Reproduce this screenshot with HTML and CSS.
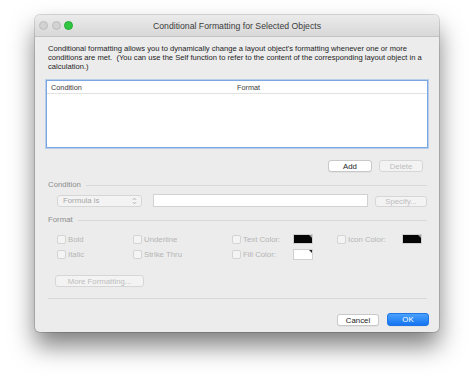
FILE: index.html
```html
<!DOCTYPE html>
<html lang="en">
<link rel="stylesheet" href="styles.css">
<head>
    <meta charset="UTF-8">
    <meta name="viewport" content="width=device-width, initial-scale=1.0">
    <title>Conditional Formatting</title>
</head>
<body>
    <div class="window">
        <div class="titlebar">
            <div class="lights">
                <span class="light"></span>
                <span class="light"></span>
                <span class="light green"></span>
            </div>
            <div class="title">Conditional Formatting for Selected Objects</div>
        </div>

        <div class="content">
            <p class="desc">Conditional formatting allows you to dynamically change a layout object's formatting whenever one or more conditions are met.&nbsp; (You can use the Self function to refer to the content of the corresponding layout object in a calculation.)</p>

            <div class="table">
                <div class="table-head">
                    <div class="col-cond">Condition</div>
                    <div class="col-format">Format</div>
                </div>
            </div>

            <div class="list-buttons">
                <button class="btn add">Add</button>
                <button class="btn delete" disabled>Delete</button>
            </div>

            <div class="section"><span>Condition</span><div class="rule"></div></div>
            <div class="condition-row">
                <div class="popup">
                    <span>Formula is</span>
                    <svg width="5" height="8" viewBox="0 0 5 8"><path d="M0.8 3 L2.5 1.2 L4.2 3 M0.8 5 L2.5 6.8 L4.2 5" fill="none" stroke="#a8a8a8" stroke-width="0.8"/></svg>
                </div>
                <div class="field"></div>
                <button class="btn specify" disabled>Specify...</button>
            </div>

            <div class="section"><span>Format</span><div class="rule"></div></div>
            <div class="format-grid">
                <div class="opt"><span class="check"></span>Bold</div>
                <div class="opt"><span class="check"></span>Underline</div>
                <div class="opt"><span class="check"></span><span class="lbl-text">Text Color:</span><span class="swatch black"></span></div>
                <div class="opt"><span class="check"></span><span class="lbl-icon">Icon Color:</span><span class="swatch black"></span></div>
                <div class="opt"><span class="check"></span>Italic</div>
                <div class="opt"><span class="check"></span>Strike Thru</div>
                <div class="opt"><span class="check"></span><span class="lbl-text">Fill Color:</span><span class="swatch white"></span></div>
            </div>

            <button class="btn more" disabled>More Formatting...</button>

            <div class="separator"></div>

            <div class="footer">
                <button class="btn cancel">Cancel</button>
                <button class="btn ok">OK</button>
            </div>
        </div>
    </div>
</body>
</html>
```

FILE: styles.css
```css
* {
    padding: 0;
    margin: 0;
    box-sizing: border-box;
    font-family: 'Liberation Sans', Arial, sans-serif;
}

html, body {
    background: white;
    min-height: 100%;
}

body {
    height: 382px;
    padding-top: 15px;
}

.window {
    width: 404px;
    height: 317px;
    margin-left: 35px;
    background: #ececec;
    border-radius: 5px;
    box-shadow: 0 0 0 1px rgba(0, 0, 0, 0.14), 0 14px 24px rgba(0, 0, 0, 0.5);
    overflow: hidden;
}

.titlebar {
    position: relative;
    height: 22px;
    display: flex;
    align-items: center;
    justify-content: center;
    background: linear-gradient(#ebebeb, #d8d8d8);
    border-bottom: 1px solid #c3c3c3;
}

.lights {
    position: absolute;
    left: 4px;
    top: 6px;
    display: flex;
    gap: 3.5px;
}

.light {
    width: 9px;
    height: 9px;
    border-radius: 50%;
    background: #d2d2d2;
    border: 1px solid #bdbdbd;
}

.light.green {
    background: #2fc640;
    border-color: #26a935;
}

.title {
    font-size: 8.7px;
    color: #3c3c3c;
}

.content {
    padding: 7px 12px 0 13px;
}

.desc {
    font-size: 7.6px;
    line-height: 9px;
    color: #1e1e1e;
    height: 27px;
}

.table {
    margin: 9px -1px 0 -2px;
    height: 68px;
    background: white;
    border: 1px solid #7aa6e2;
    box-shadow: 0 0 0 1px rgba(125, 170, 230, 0.45);
}

.table-head {
    display: flex;
    height: 13px;
    align-items: center;
    border-bottom: 1px solid #e2e2e2;
    font-size: 7.3px;
    color: #3a3a3a;
}

.col-cond {
    width: 190px;
    padding-left: 4px;
}

.btn {
    height: 12px;
    border: 1px solid #c8c8c8;
    border-radius: 3px;
    background: white;
    font-size: 7.8px;
    color: #1c1c1c;
    box-shadow: 0 0.5px 0 rgba(0, 0, 0, 0.08);
}

.btn:disabled {
    background: #f3f3f3;
    color: #bdbdbd;
    border-color: #d6d6d6;
    box-shadow: none;
}

.list-buttons {
    display: flex;
    justify-content: flex-end;
    gap: 7px;
    margin-top: 12px;
    padding-right: 4px;
}

.add, .delete {
    width: 44px;
}

.section {
    display: flex;
    align-items: center;
    gap: 5px;
    height: 10px;
    margin-top: 7px;
    font-size: 7.8px;
    color: #8c8c8c;
}

.section .rule {
    flex: 1;
    border-top: 1px solid #d8d8d8;
    margin-top: 2px;
}

.condition-row {
    display: flex;
    align-items: center;
    height: 13px;
    margin-top: 5px;
    padding-left: 9px;
}

.popup {
    width: 85px;
    height: 12px;
    display: flex;
    align-items: center;
    justify-content: space-between;
    padding: 0 4px 0 5px;
    background: #f3f3f3;
    border: 1px solid #d6d6d6;
    border-radius: 3px;
    font-size: 7.8px;
    color: #a6a6a6;
}

.field {
    flex: 1;
    height: 13px;
    margin: 0 7px 0 11px;
    background: white;
    border: 1px solid #d2d2d2;
}

.specify {
    width: 52px;
    height: 11px;
    margin-top: 1px;
}

.format-grid {
    display: grid;
    grid-template-columns: 76px 99px 105px 1fr;
    grid-auto-rows: 10px;
    row-gap: 5px;
    margin-top: 10px;
    padding-left: 9px;
    font-size: 7.8px;
    color: #b5b5b5;
}

.opt {
    display: flex;
    align-items: center;
}

.check {
    width: 9px;
    height: 9px;
    margin-right: 2px;
    background: #f4f4f4;
    border: 1px solid #d4d4d4;
    border-radius: 2px;
}

.lbl-text {
    width: 50px;
}

.lbl-icon {
    width: 54px;
}

.swatch {
    position: relative;
    width: 20px;
    height: 10px;
    border: 1px solid #d0d0d0;
}

.swatch.black {
    background: #050505;
}

.swatch.white {
    background: white;
    height: 11px;
}

.swatch::after {
    content: '';
    position: absolute;
    top: 0;
    right: 0;
    border-style: solid;
    border-width: 0 3px 3px 0;
}

.swatch.black::after {
    border-color: transparent #9a9a9a transparent transparent;
}

.swatch.white::after {
    border-color: transparent #222 transparent transparent;
}

.more {
    display: block;
    width: 89px;
    margin: 16px 0 0 7px;
}

.separator {
    margin-top: 11px;
    border-top: 1px solid #d8d8d8;
}

.footer {
    display: flex;
    justify-content: flex-end;
    align-items: flex-end;
    gap: 8px;
    height: 13px;
    margin-top: 14px;
    margin-right: -2px;
}

.cancel {
    width: 42px;
}

.ok {
    width: 42px;
    height: 13px;
    border: 1px solid #1f74e6;
    background: linear-gradient(#4aa2fd, #1474f2);
    color: white;
}
```
